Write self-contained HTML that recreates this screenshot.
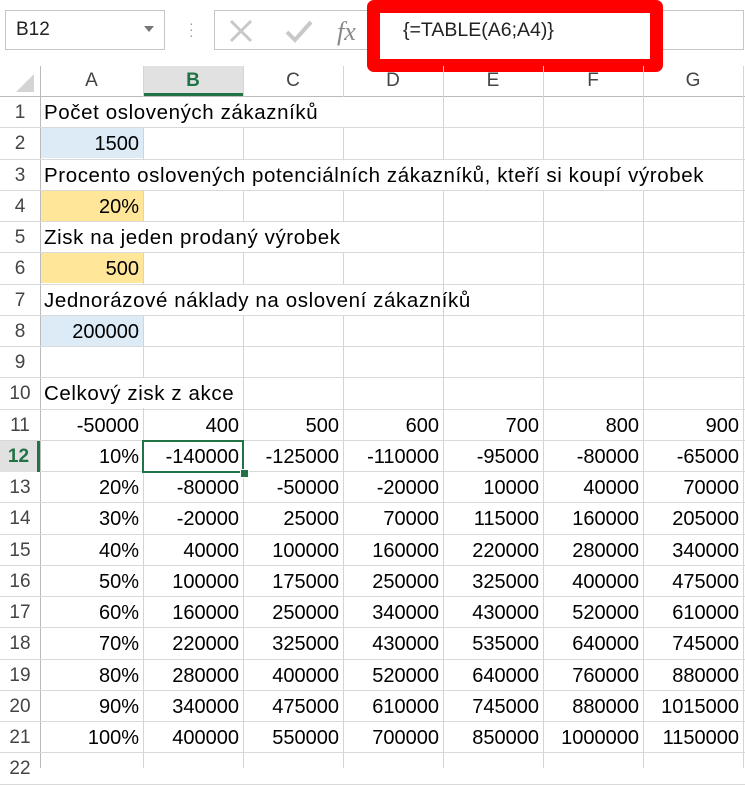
<!DOCTYPE html>
<html><head><meta charset="utf-8"><style>
body{margin:0;width:745px;height:768px;overflow:hidden;background:#fff;font-family:"Liberation Sans",Arial,sans-serif;position:relative}
.a{position:absolute}
.c{position:absolute;height:31px;line-height:32px;font-size:20px;color:#000;box-sizing:border-box;padding:0 4px;white-space:nowrap}
.t{font-size:20.5px;letter-spacing:0.6px}
.r{text-align:right}
.hl{position:absolute;background:#d4d4d4}
.rh{position:absolute;left:0;width:40px;text-align:center;font-size:19px;color:#444;line-height:31px}
.ch{position:absolute;top:66px;height:30px;line-height:30px;text-align:center;font-size:19px;color:#444}
</style></head><body>
<div class="a" style="left:5px;top:10px;width:160px;height:40px;border:1px solid #c6c6c6;box-sizing:border-box"></div>
<div class="a" style="left:16px;top:19px;font-size:19px;color:#222">B12</div>
<div class="a" style="left:144px;top:26px;width:0;height:0;border-left:5px solid transparent;border-right:5px solid transparent;border-top:6px solid #777"></div>
<div class="a" style="left:189px;top:20px;color:#999;font-size:14px;line-height:6px">·<br>·<br>·</div>
<div class="a" style="left:214px;top:10px;width:530px;height:40px;border:1px solid #c6c6c6;box-sizing:border-box"></div>
<svg class="a" style="left:225px;top:16px" width="150" height="30"><path d="M6 5L26 25M26 5L6 25" stroke="#c8c8c8" stroke-width="3"/><path d="M62 16L70 24L86 6" stroke="#c8c8c8" stroke-width="4" fill="none"/><text x="112" y="24" font-family="Liberation Serif" font-style="italic" font-size="26" fill="#888">fx</text></svg>
<div class="a" style="left:367px;top:0;width:296px;height:72px;border:13px solid #f00;border-radius:7px;box-sizing:border-box;background:#fff"></div>
<div class="a" style="left:403px;top:19px;font-size:19.5px;color:#222">{=TABLE(A6;A4)}</div>
<div class="a" style="left:0;top:72px;width:745px;height:25px;background:#fff"></div>
<svg class="a" style="left:14px;top:72px" width="22" height="22"><path d="M20 2V20H2Z" fill="#d4d4d4"/></svg>
<div class="a" style="left:143px;top:66px;width:100px;height:30px;background:#e1e1e1;border-bottom:3px solid #217346;box-sizing:border-box"></div>
<div class="ch" style="left:40px;width:103px">A</div>
<div class="ch" style="left:143px;width:100px;color:#217346;font-weight:bold">B</div>
<div class="ch" style="left:243px;width:100px">C</div>
<div class="ch" style="left:343px;width:100px">D</div>
<div class="ch" style="left:443px;width:100px">E</div>
<div class="ch" style="left:543px;width:100px">F</div>
<div class="ch" style="left:643px;width:100px">G</div>
<div class="hl" style="left:0;top:96px;width:745px;height:1px;background:#bbb"></div>
<div class="hl" style="left:40px;top:66px;width:1px;height:702px;background:#bbb"></div>
<div id="g"></div>
<script>
var cols=[40,143,243,343,443,543,643,743];
var h='';
for(var i=1;i<cols.length;i++){h+='<div class="hl" style="left:'+cols[i]+'px;top:66px;width:1px;height:702px"></div>';}
for(var r=1;r<=22;r++){var y=Math.round(97+(r)*31.25)-1;h+='<div class="hl" style="left:0;top:'+y+'px;width:745px;height:1px;background:#d9d9d9"></div>';}
function Y(r){return Math.round(97+(r-1)*31.25);}
var fills={2:'#ddebf7',4:'#ffe699',6:'#ffe699',8:'#ddebf7'};
for(var k in fills){h+='<div class="a" style="left:41px;top:'+Y(+k)+'px;width:102px;height:30px;background:'+fills[k]+'"></div>';}
var txt={1:'Počet oslovených zákazníků',3:'Procento oslovených potenciálních zákazníků, kteří si koupí výrobek',5:'Zisk na jeden prodaný výrobek',7:'Jednorázové náklady na oslovení zákazníků',10:'Celkový zisk z akce'};
for(var k in txt){h+='<div class="a" style="left:41px;top:'+Y(+k)+'px;width:'+(k==3?702:(k==10?202:402))+'px;height:30px;background:#fff"></div><div class="c t" style="left:40px;top:'+Y(+k)+'px">'+txt[k]+'</div>';}
var vals={2:'1500',4:'20%',6:'500',8:'200000'};
for(var k in vals){h+='<div class="c r" style="left:40px;width:103px;top:'+Y(+k)+'px">'+vals[k]+'</div>';}
for(var r=1;r<=22;r++){var st=r==12?'background:#e1e1e1;color:#217346;font-weight:bold;border-right:3px solid #217346;box-sizing:border-box;height:31px;':'';h+='<div class="rh" style="top:'+Y(r)+'px;'+st+'">'+r+'</div>';}
var data=[
['-50000','400','500','600','700','800','900'],
['10%','-140000','-125000','-110000','-95000','-80000','-65000'],
['20%','-80000','-50000','-20000','10000','40000','70000'],
['30%','-20000','25000','70000','115000','160000','205000'],
['40%','40000','100000','160000','220000','280000','340000'],
['50%','100000','175000','250000','325000','400000','475000'],
['60%','160000','250000','340000','430000','520000','610000'],
['70%','220000','325000','430000','535000','640000','745000'],
['80%','280000','400000','520000','640000','760000','880000'],
['90%','340000','475000','610000','745000','880000','1015000'],
['100%','400000','550000','700000','850000','1000000','1150000']];
for(var j=0;j<data.length;j++){for(var c=0;c<7;c++){h+='<div class="c r" style="left:'+cols[c]+'px;width:'+(cols[c+1]-cols[c])+'px;top:'+Y(11+j)+'px">'+data[j][c]+'</div>';}}
var sy=Y(12);
h+='<div class="a" style="left:142px;top:'+(sy-1)+'px;width:102px;height:33px;border:2px solid #217346;box-sizing:border-box"></div>';
h+='<div class="a" style="left:240px;top:'+(sy+28)+'px;width:7px;height:7px;background:#217346;border:1px solid #fff"></div>';
document.getElementById('g').innerHTML=h;
</script>
</body></html>
